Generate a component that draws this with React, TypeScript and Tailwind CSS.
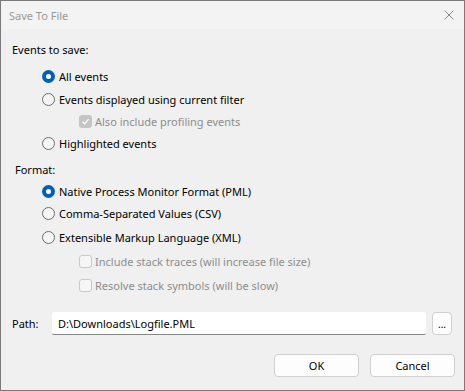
import React from "react";

const FONT = { fontFamily: '"Noto Sans", "Open Sans", sans-serif' };

function Radio({ checked }: { checked?: boolean }) {
  if (checked) {
    return (
      <span className="w-[13px] h-[13px] rounded-full bg-[#005fb8] flex items-center justify-center shrink-0">
        <span className="w-[5px] h-[5px] rounded-full bg-white" />
      </span>
    );
  }
  return (
    <span className="w-[13px] h-[13px] rounded-full border border-[#6b6b6b] bg-[#f5f5f5] shrink-0" />
  );
}

function Checkbox({ checked }: { checked?: boolean }) {
  if (checked) {
    return (
      <span className="w-[13px] h-[13px] rounded-[3px] bg-[#c5c5c5] flex items-center justify-center shrink-0">
        <svg width="9" height="9" viewBox="0 0 9 9" fill="none">
          <path d="M1.5 4.8 L3.6 6.8 L7.6 2.2" stroke="#fff" strokeWidth="1.2" />
        </svg>
      </span>
    );
  }
  return (
    <span className="w-[13px] h-[13px] rounded-[3px] border border-[#c9c9c9] bg-[#f6f6f6] shrink-0" />
  );
}

function RadioRow({ label, checked, className = "" }: { label: string; checked?: boolean; className?: string }) {
  return (
    <div className={`h-[22px] pl-[41px] flex items-center gap-[4px] text-[#000] ${className}`}>
      <Radio checked={checked} />
      <span>{label}</span>
    </div>
  );
}

function CheckRow({ label, checked, className = "" }: { label: string; checked?: boolean; className?: string }) {
  return (
    <div className={`h-[22px] pl-[78px] flex items-center gap-[3px] text-[#8d8d8d] ${className}`}>
      <Checkbox checked={checked} />
      <span>{label}</span>
    </div>
  );
}

export default function App() {
  return (
    <div
      className="w-[465px] h-[391px] border border-[#7a7a7a] bg-[#f0f0f0] flex flex-col text-[11px] leading-none"
      style={FONT}
    >
      {/* Title bar */}
      <div className="h-[28px] bg-[#f3f3f3] flex items-center justify-between pl-[8px] pr-[10px] shrink-0">
        <span className="text-[#9a9a9a]">Save To File</span>
        <svg width="10" height="10" viewBox="0 0 10 10">
          <path d="M0.5 0.5 L9.5 9.5 M9.5 0.5 L0.5 9.5" stroke="#8a8a8a" strokeWidth="1" />
        </svg>
      </div>

      {/* Body */}
      <div className="flex flex-col">
        <div className="h-[20px] mt-[10px] pl-[11px] flex items-center">Events to save:</div>
        <RadioRow className="mt-[6px]" label="All events" checked />
        <RadioRow className="mt-[1px]" label="Events displayed using current filter" />
        <CheckRow label="Also include profiling events" checked />
        <RadioRow label="Highlighted events" />

        <div className="h-[20px] mt-[5px] pl-[14px] flex items-center">Format:</div>
        <RadioRow className="mt-[1px]" label="Native Process Monitor Format (PML)" checked />
        <RadioRow label="Comma-Separated Values (CSV)" />
        <RadioRow className="mt-[2px]" label="Extensible Markup Language (XML)" />
        <CheckRow className="mt-[2px]" label="Include stack traces (will increase file size)" />
        <CheckRow className="mt-[2px]" label="Resolve stack symbols (will be slow)" />

        {/* Path */}
        <div className="mt-[16px] h-[23px] pl-[11px] pr-[12px] flex items-center">
          <span className="w-[40px]">Path:</span>
          <div className="w-[374px] h-[23px] bg-white rounded-[2px] border-b border-[#868686] flex items-center pl-[6px]">
            D:\Downloads\Logfile.PML
          </div>
          <div className="ml-[6px] w-[20px] h-[23px] bg-[#fdfdfd] border border-[#d0d0d0] rounded-[4px] flex items-center justify-center text-[10px]">
            ...
          </div>
        </div>

        {/* Buttons */}
        <div className="mt-[19px] pr-[9px] flex justify-end gap-[11px]">
          <button className="w-[85px] h-[23px] bg-[#fdfdfd] border border-[#d0d0d0] rounded-[4px] text-[11px] leading-none">
            OK
          </button>
          <button className="w-[85px] h-[23px] bg-[#fdfdfd] border border-[#d0d0d0] rounded-[4px] text-[11px] leading-none">
            Cancel
          </button>
        </div>
      </div>
    </div>
  );
}
